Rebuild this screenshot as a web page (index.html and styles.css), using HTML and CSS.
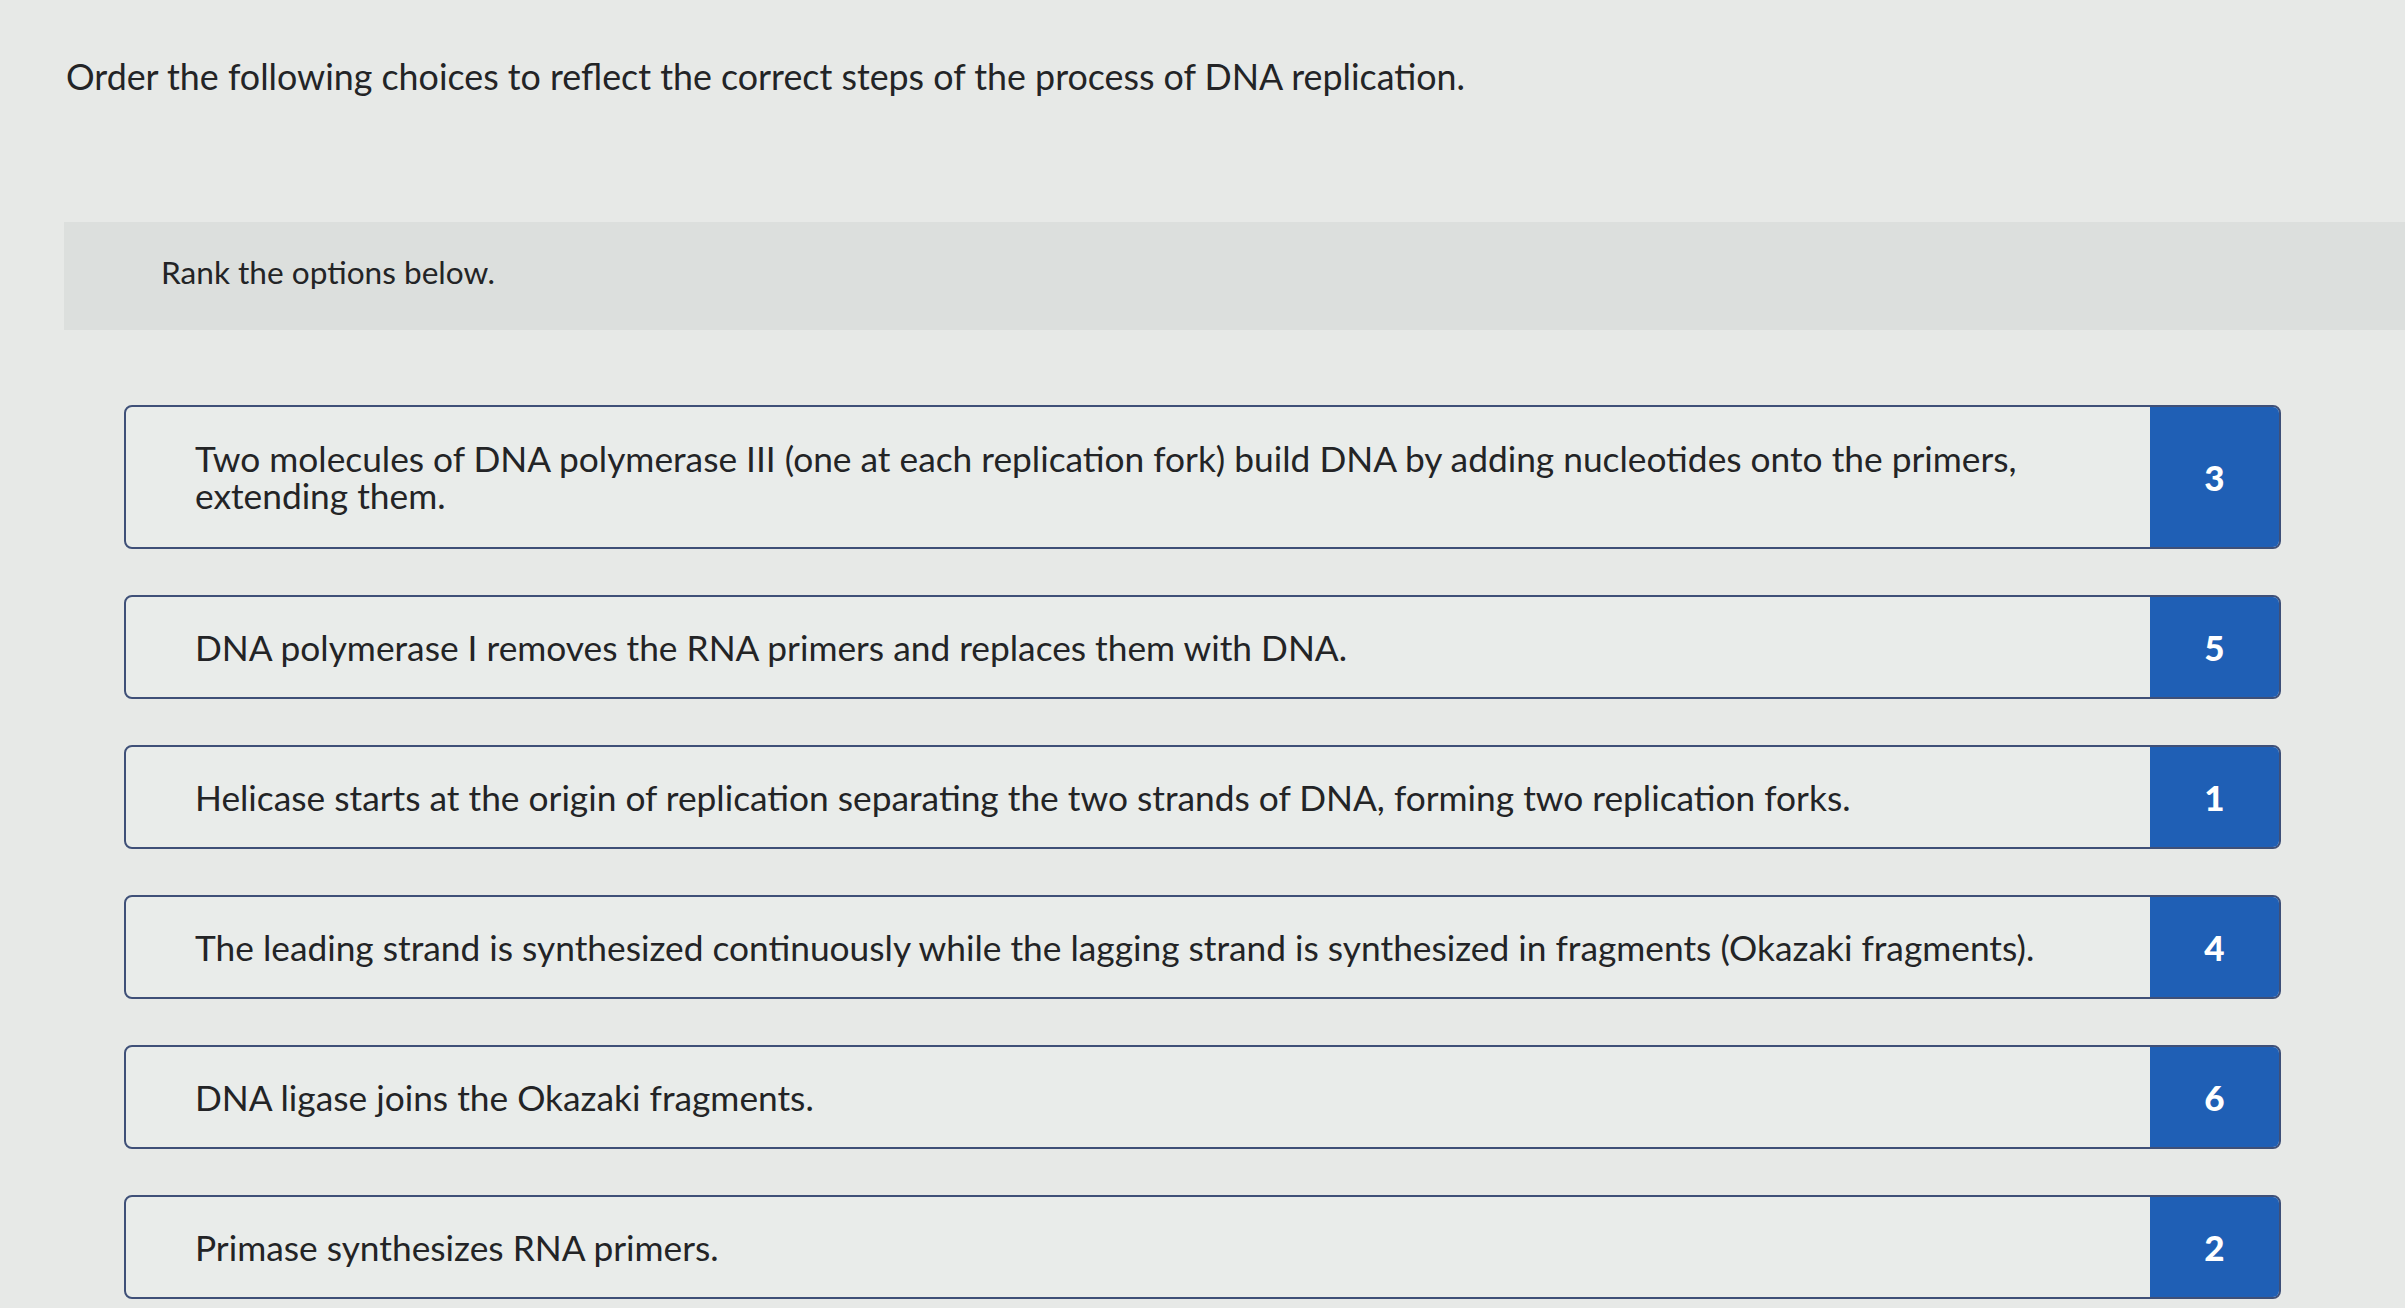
FILE: index.html
```html
<!DOCTYPE html>
<html lang="en">
<head>
<meta charset="utf-8">
<title>Rank DNA replication steps</title>
<link rel="stylesheet" href="styles.css">
</head>
<body>
  <p class="prompt">Order the following choices to reflect the correct steps of the process of DNA replication.</p>
  <section class="panel">
    <div class="panel-head">Rank the options below.</div>
    <ol class="rank-list">
      <li class="rank-item">
        <div class="rank-text">Two molecules of DNA polymerase III (one at each replication fork) build DNA by adding nucleotides onto the primers, extending them.</div>
        <div class="rank-badge">3</div>
      </li>
      <li class="rank-item">
        <div class="rank-text">DNA polymerase I removes the RNA primers and replaces them with DNA.</div>
        <div class="rank-badge">5</div>
      </li>
      <li class="rank-item">
        <div class="rank-text">Helicase starts at the origin of replication separating the two strands of DNA, forming two replication forks.</div>
        <div class="rank-badge">1</div>
      </li>
      <li class="rank-item">
        <div class="rank-text">The leading strand is synthesized continuously while the lagging strand is synthesized in fragments (Okazaki fragments).</div>
        <div class="rank-badge">4</div>
      </li>
      <li class="rank-item">
        <div class="rank-text">DNA ligase joins the Okazaki fragments.</div>
        <div class="rank-badge">6</div>
      </li>
      <li class="rank-item">
        <div class="rank-text">Primase synthesizes RNA primers.</div>
        <div class="rank-badge">2</div>
      </li>
    </ol>
  </section>
</body>
</html>
```

FILE: styles.css
```css
html, body {
  margin: 0;
  padding: 0;
}
body {
  background: #e7e9e7;
  font-family: Lato, "Open Sans", "Liberation Sans", sans-serif;
  color: #232426;
  overflow: hidden;
}
.prompt {
  margin: 0;
  padding: 58px 0 0 66px;
  line-height: 38px;
  font-size: 35.8px;
}
.panel {
  margin: 126px 0 0 64px;
}
.panel-head {
  height: 108px;
  box-sizing: border-box;
  padding: 31px 0 0 97px;
  line-height: 38px;
  font-size: 31.6px;
  background: #dcdfdd;
}
.rank-list {
  list-style: none;
  margin: 0;
  padding: 75px 0 0 60px;
  display: flex;
  flex-direction: column;
  gap: 46px;
}
.rank-item {
  width: 2157px;
  box-sizing: border-box;
  display: flex;
  border: 2px solid #3f5078;
  border-radius: 8px;
  overflow: hidden;
  background: #e9ecea;
  font-size: 35.3px;
}
.rank-item:first-child {
  min-height: 144px;
}
.rank-text {
  flex: 1;
  padding: 31.5px 70px 31.5px 69px;
  line-height: 37px;
  display: flex;
  align-items: center;
}
.rank-badge {
  width: 129px;
  flex: none;
  background: #1f5fb5;
  color: #ffffff;
  font-weight: 900;
  font-size: 35px;
  display: flex;
  align-items: center;
  justify-content: center;
}
```
